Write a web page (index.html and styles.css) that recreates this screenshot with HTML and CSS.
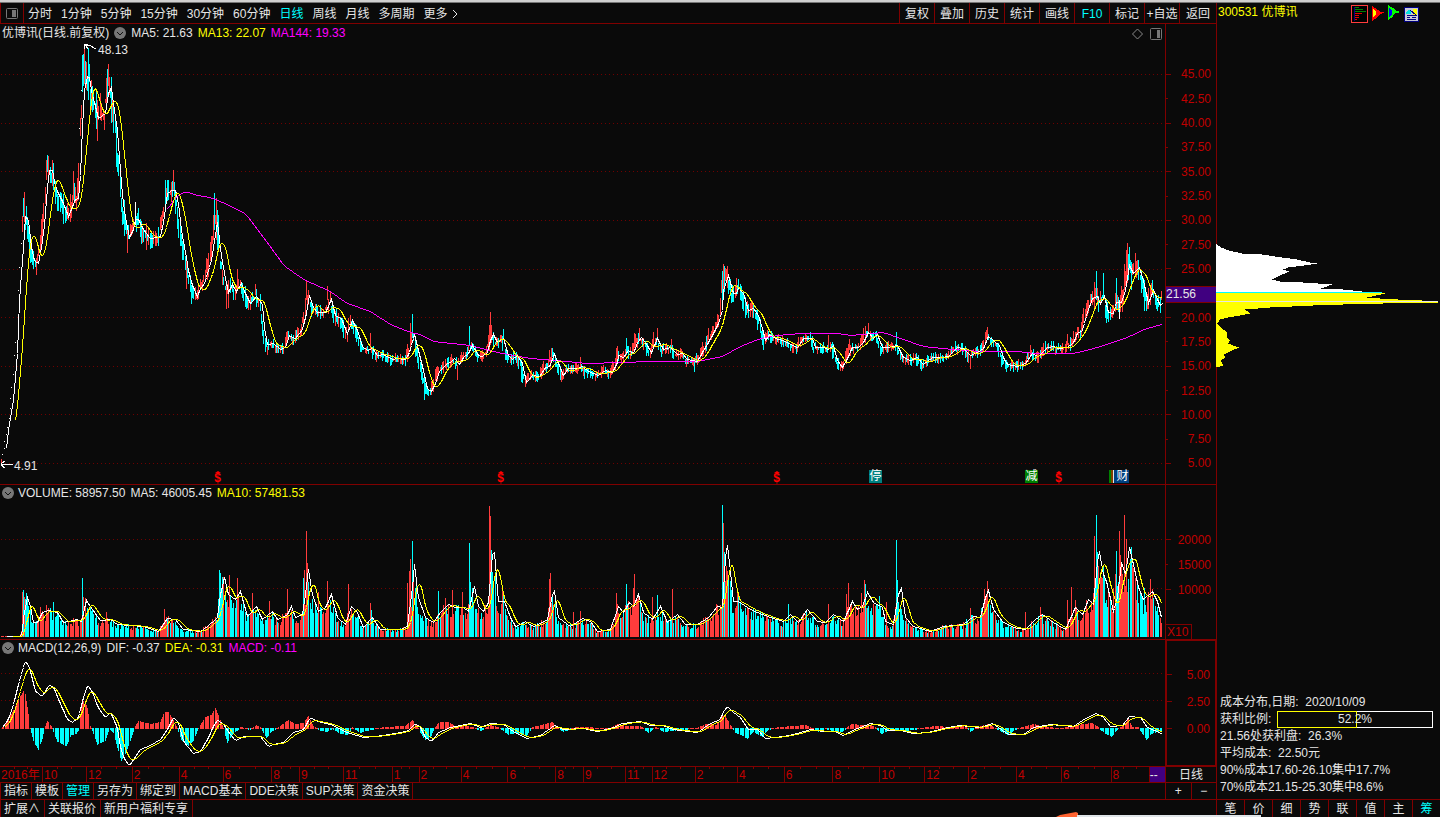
FILE: index.html
```html
<!DOCTYPE html>
<html lang="zh-CN">
<head>
    <meta charset="UTF-8">
    <meta name="viewport" content="width=device-width, initial-scale=1.0">
    <title>300531 优博讯 日线</title>
    <link rel="stylesheet" href="styles.css">
</head>
<body>
    <div class="window-edge"></div>
    <div class="terminal">
        <nav class="toolbar">
            <button type="button" class="layout-btn" aria-label="布局">
                <svg width="14" height="12" viewBox="0 0 14 12">
                    <rect x="1.5" y="0.5" width="11" height="10" rx="1" fill="none" stroke="#777"/>
                    <rect x="7" y="2" width="4" height="7" fill="#777"/>
                </svg>
            </button>
            <div class="periods">
                <button type="button">分时</button>
                <button type="button">1分钟</button>
                <button type="button">5分钟</button>
                <button type="button">15分钟</button>
                <button type="button">30分钟</button>
                <button type="button">60分钟</button>
                <button type="button" class="active">日线</button>
                <button type="button">周线</button>
                <button type="button">月线</button>
                <button type="button">多周期</button>
                <button type="button" class="more">更多<svg width="6" height="10" viewBox="0 0 6 10"><path d="M1 1L5 5L1 9" fill="none" stroke="#e6e6e6"/></svg></button>
            </div>
            <div class="tools">
                <button type="button">复权</button>
                <button type="button">叠加</button>
                <button type="button">历史</button>
                <button type="button">统计</button>
                <button type="button">画线</button>
                <button type="button" class="active">F10</button>
                <button type="button">标记</button>
                <button type="button">+自选</button>
                <button type="button">返回</button>
            </div>
        </nav>

        <header class="stock">
            <span class="stock-name">300531 优博讯</span>
            <div class="stock-icons">
                <svg width="17" height="18" viewBox="0 0 17 18" shape-rendering="crispEdges">
                    <rect x="0.5" y="0.5" width="16" height="17" fill="#000" stroke="#ff3c3c"/>
                    <path d="M3.5 2V16" stroke="#000080"/>
                    <path d="M4 2.5H8M4 4.5H12M4 6.5H15" stroke="#008000"/>
                    <path d="M4 8.5H11M4 10.5H8M4 12.5H8M4 14.5H6" stroke="#e00000"/>
                </svg>
                <svg width="12" height="18" viewBox="0 0 12 18" shape-rendering="crispEdges">
                    <path d="M0 1L3 3L6 5L8 7H12V8L8 9L6 11L3 14L0 16Z" fill="#f00"/>
                    <path d="M1 4L4 7V9L1 13Z" fill="#ff0"/>
                </svg>
                <svg width="12" height="18" viewBox="0 0 12 18" shape-rendering="crispEdges">
                    <path d="M0 0L3 2L7 4L8 6H11V8L7 8L5 11L3 13L0 15Z" fill="#0f0"/>
                    <path d="M1 3L4 6V9L1 13Z" fill="#00f"/>
                </svg>
                <svg width="15" height="15" viewBox="0 0 15 15" shape-rendering="crispEdges">
                    <rect width="15" height="15" fill="#000080"/>
                    <rect x="1" y="1" width="13" height="13" fill="#c8c8d8"/>
                    <rect x="9" y="2" width="4" height="6" fill="#ff0"/>
                    <path d="M2 7V5L4 3H7V7Z" fill="#00e0e0"/>
                    <path d="M6 3L12 8H3" fill="none" stroke="#000080"/>
                    <path d="M3 10.500H6M8 10.500H12M3 12.500H12" stroke="#000080"/>
                </svg>
            </div>
        </header>

        <section class="pane price-pane">
            <svg id="price" class="chart" viewBox="0 24 1165 460" preserveAspectRatio="none"></svg>
            <div class="legend">
                <span>优博讯(日线.前复权)</span>
                <svg class="fold" width="12" height="12" viewBox="0 0 12 12"><circle cx="6" cy="6" r="6" fill="#777"/><path d="M3 5L6 8L9 5" fill="none" stroke="#111" stroke-width="1"/></svg>
                <span>MA5: 21.63</span>
                <span class="yellow">MA13: 22.07</span>
                <span class="magenta">MA144: 19.33</span>
            </div>
            <div class="pane-icons">
                <svg width="11" height="12" viewBox="0 0 11 12"><path d="M5.500 1L10.500 6L5.500 11L0.500 6Z" fill="none" stroke="#888"/></svg>
                <svg width="12" height="12" viewBox="0 0 12 12"><rect x="0.500" y="0.500" width="11" height="11" rx="1" fill="none" stroke="#777"/><rect x="7" y="2" width="3" height="8" fill="#777"/></svg>
            </div>
            <span class="high-label">48.13</span>
            <span class="low-label">4.91</span>
            <div id="markers"></div>
        </section>
        <div class="axis price-axis">
            <ol id="price-scale"></ol>
            <span class="price-tag">21.56</span>
        </div>

        <section class="distribution">
            <svg id="dist" class="chart" viewBox="1216 24 224 460" preserveAspectRatio="none"></svg>
        </section>

        <section class="pane volume-pane">
            <svg id="volume" class="chart" viewBox="0 485 1165 154" preserveAspectRatio="none"></svg>
            <div class="legend">
                <svg class="fold" width="12" height="12" viewBox="0 0 12 12"><circle cx="6" cy="6" r="6" fill="#777"/><path d="M3 5L6 8L9 5" fill="none" stroke="#111" stroke-width="1"/></svg>
                <span>VOLUME: 58957.50</span>
                <span>MA5: 46005.45</span>
                <span class="yellow">MA10: 57481.53</span>
            </div>
        </section>
        <div class="axis volume-axis">
            <ol id="volume-scale"></ol>
            <span class="unit">X10</span>
        </div>

        <section class="pane macd-pane">
            <svg id="macd" class="chart" viewBox="0 640 1165 126" preserveAspectRatio="none"></svg>
            <div class="legend">
                <svg class="fold" width="12" height="12" viewBox="0 0 12 12"><circle cx="6" cy="6" r="6" fill="#777"/><path d="M3 5L6 8L9 5" fill="none" stroke="#111" stroke-width="1"/></svg>
                <span>MACD(12,26,9)</span>
                <span>DIF: -0.37</span>
                <span class="yellow">DEA: -0.31</span>
                <span class="magenta">MACD: -0.11</span>
            </div>
        </section>
        <div class="axis macd-axis">
            <ol id="macd-scale"></ol>
        </div>

        <div class="dates" id="dates"></div>
        <div class="period-name">日线</div>

        <nav class="tabs indicator-tabs">
            <button type="button">指标</button>
            <button type="button">模板</button>
            <button type="button" class="active">管理</button>
            <button type="button">另存为</button>
            <button type="button">绑定到</button>
            <button type="button">MACD基本</button>
            <button type="button">DDE决策</button>
            <button type="button">SUP决策</button>
            <button type="button">资金决策</button>
        </nav>
        <div class="zoom-btns">
            <button type="button">+</button>
            <button type="button">−</button>
        </div>

        <section class="cost-info">
            <p>成本分布,日期:&nbsp; 2020/10/09</p>
            <div class="profit-row">
                <span>获利比例:</span>
                <div class="profit-bar"><div class="profit-fill" id="profit-fill"></div><span>52.2%</span></div>
            </div>
            <p>21.56处获利盘:&nbsp; 26.3%</p>
            <p>平均成本:&nbsp; 22.50元</p>
            <p>90%成本17.60-26.10集中17.7%</p>
            <p>70%成本21.15-25.30集中8.6%</p>
        </section>

        <nav class="tabs extend-tabs">
            <button type="button">扩展∧</button>
            <button type="button">关联报价</button>
            <button type="button">新用户福利专享</button>
        </nav>
        <nav class="side-tabs">
            <button type="button">笔</button>
            <button type="button">价</button>
            <button type="button">细</button>
            <button type="button">势</button>
            <button type="button">联</button>
            <button type="button">值</button>
            <button type="button">主</button>
            <button type="button" class="active">筹</button>
        </nav>
    </div>
    <svg class="popup-edge" width="205" height="5" viewBox="0 0 205 5">
        <path d="M0 5L4 3L20 0L22 1V5Z" fill="#ff6432"/>
        <rect x="21" y="3" width="184" height="2" fill="#dfe4e8"/>
    </svg>

    <script src="chart.js"></script>
</body>
</html>
```
FILE: styles.css
```css
:root {
    --bg: #0a0a0a;
    --line: #800000;
    --text: #e6e6e6;
    --scale: #c00000;
    --cyan: #00ffff;
    --yellow: #ffff00;
    --magenta: #ff00ff;
    --purple: #400080;
}
* {
    box-sizing: border-box;
}
body {
    position: relative;
    margin: 0;
    height: 100vh;
    display: flex;
    flex-direction: column;
    overflow: hidden;
    background: var(--bg);
    color: var(--text);
    font-family: "Liberation Sans", "Noto Sans CJK SC", sans-serif;
    font-size: 12px;
    line-height: 16px;
    white-space: nowrap;
}
button {
    margin: 0;
    padding: 0;
    border: 0;
    background: none;
    color: inherit;
    font: inherit;
    cursor: pointer;
}
p, ol {
    margin: 0;
    padding: 0;
    list-style: none;
}
svg {
    display: block;
}
.active {
    color: var(--cyan);
}
.yellow {
    color: var(--yellow);
}
.magenta {
    color: var(--magenta);
}
.window-edge {
    height: 3px;
    flex: none;
    background: #d0d0d0;
    border-bottom: 1px solid #777;
}
.terminal {
    flex: 1;
    min-height: 0;
    display: grid;
    grid-template-columns: minmax(0, 1fr) 51px 224px;
    grid-template-rows: 21px minmax(0, 1fr) 155px 127px 16px 17px 17px;
}

/* toolbar */
.toolbar {
    grid-column: 1 / 3;
    display: flex;
    border-bottom: 1px solid var(--line);
}
.toolbar button {
    padding-top: 1px;
}
.toolbar .layout-btn {
    width: 24px;
    padding-left: 4px;
    border-left: 1px solid var(--line);
    border-right: 1px solid var(--line);
}
.periods {
    display: flex;
    flex: 1;
    gap: 9px;
    padding-left: 4px;
}
.more {
    display: flex;
    align-items: center;
    gap: 4px;
}
.tools {
    display: flex;
}
.tools button {
    width: 35px;
    border-left: 1px solid var(--line);
}
.tools button:last-child {
    width: 37px;
}
.stock {
    display: flex;
    justify-content: space-between;
    padding: 1px 21px 0 1px;
    border-left: 1px solid var(--line);
    color: var(--yellow);
}
.stock-icons {
    display: flex;
    align-items: center;
    gap: 4px;
}

/* chart panes */
.pane {
    grid-column: 1;
    position: relative;
    overflow: hidden;
    border-bottom: 1px solid var(--line);
}
.chart {
    width: 100%;
    height: 100%;
    shape-rendering: crispEdges;
}
.chart path {
    fill: none;
    vector-effect: non-scaling-stroke;
}
.legend {
    position: absolute;
    top: 0;
    left: 2px;
    display: flex;
    align-items: center;
    gap: 5px;
}
.price-pane .legend {
    top: 1px;
}
.volume-pane .fold,
.macd-pane .fold {
    margin-right: -1px;
}
.pane-icons {
    position: absolute;
    top: 4px;
    right: 3px;
    display: flex;
    gap: 7px;
}
.high-label {
    position: absolute;
    top: 18px;
    left: 98px;
}
.low-label {
    position: absolute;
    bottom: 10px;
    left: 14px;
}
.marker {
    position: absolute;
    bottom: 1px;
    width: 13px;
    height: 13px;
    line-height: 13px;
    text-align: center;
    color: #fff;
}
.marker.dividend {
    color: #f00;
    font-weight: bold;
    bottom: 0;
    line-height: 15px;
}
.marker.dividend::before {
    content: "";
    position: absolute;
    top: 0;
    left: 4px;
    border: 3px solid transparent;
    border-top: 0;
    border-bottom: 2px solid #f00;
}
.marker.halt {
    background: #008080;
}
.marker.reduce {
    background: #008000;
}
.marker.report {
    width: 16px;
    padding-left: 2px;
    background: #004080;
    border-left: 1px solid #e6e6e6;
}
.marker.stacked {
    width: 6px;
    background: linear-gradient(90deg, #008000 2px, #804000 2px);
}

/* value axes */
.axis {
    position: relative;
    border-left: 1px solid var(--line);
    border-bottom: 1px solid var(--line);
    color: var(--scale);
}
.axis ol {
    height: 100%;
    display: grid;
}
.axis ol::before {
    content: "";
}
.axis li {
    display: flex;
    align-items: center;
    justify-content: space-between;
    padding-right: 5px;
    min-height: 0;
}
.axis li::before {
    content: "";
    width: 2px;
    height: 1px;
    background: var(--line);
}
.axis li.major::before {
    width: 5px;
}
.price-axis ol {
    grid-template-rows: 383fr repeat(17, 243fr) 84fr;
}
.volume-axis ol {
    grid-template-rows: 42fr repeat(3, 25fr) 37fr;
}
.macd-axis {
    border: 2px solid var(--line);
    border-top-width: 1px;
    border-right-width: 1px;
}
.macd-axis ol {
    grid-template-rows: 20fr repeat(3, 27fr) 23fr;
}
.price-tag {
    position: absolute;
    top: 57%;
    left: 0;
    right: 0;
    height: 17px;
    line-height: 15px;
    border: 1px solid var(--line);
    border-width: 1px 0;
    background: var(--purple);
    color: var(--text);
}
.unit {
    position: absolute;
    left: 0;
    bottom: 0;
    width: 26px;
    height: 15px;
    line-height: 14px;
    padding-left: 1px;
    border: 1px solid var(--line);
    border-width: 1px 1px 0 0;
}

/* date axis */
.dates {
    grid-column: 1;
    display: flex;
    border-bottom: 1px solid var(--line);
    color: var(--scale);
    line-height: 16px;
}
.dates span {
    flex-basis: 0;
    min-width: 0;
    padding-left: 1px;
    border-left: 1px solid var(--line);
    background:
        linear-gradient(var(--line), var(--line)) 33% 0 / 1px 2px no-repeat,
        linear-gradient(var(--line), var(--line)) 67% 0 / 1px 2px no-repeat;
}
.dates span:first-child {
    border-left: 0;
}
.dates .cursor {
    background: var(--purple);
    color: var(--text);
    padding-left: 0;
}
.period-name {
    border-left: 1px solid var(--line);
    border-bottom: 1px solid var(--line);
    text-align: center;
}

/* bottom tabs */
.tabs {
    display: flex;
    line-height: 16px;
}
.tabs button {
    padding: 0 4px 0 3px;
    border-right: 1px solid var(--line);
}
.indicator-tabs {
    grid-column: 1;
    border-bottom: 1px solid var(--line);
}
.indicator-tabs button {
    padding-right: 3px;
}
.extend-tabs {
    grid-column: 1 / 3;
}
.tabs button:first-child {
    border-left: 1px solid var(--line);
}
.zoom-btns {
    display: flex;
    border-bottom: 1px solid var(--line);
}
.zoom-btns button {
    flex: 1;
    line-height: 14px;
    border-left: 1px solid var(--line);
}

/* right panel */
.distribution {
    padding-bottom: 1px;
    border-left: 1px solid var(--line);
}
.distribution .chart {
    position: relative;
    margin-left: -1px;
    width: 224px;
}
.chart path.solid {
    fill: currentColor;
}
.cost-info {
    grid-column: 3;
    grid-row: 3 / 7;
    display: flex;
    flex-direction: column;
    justify-content: flex-end;
    padding: 0 7px 3px 3px;
    border-left: 1px solid var(--line);
    border-bottom: 1px solid var(--line);
    line-height: 17px;
}
.profit-row {
    display: flex;
    justify-content: space-between;
}
.profit-bar {
    position: relative;
    width: 156px;
    height: 17px;
    line-height: 15px;
    border: 1px solid #fff;
    text-align: center;
}
.profit-bar span {
    position: relative;
}
.profit-fill {
    position: absolute;
    top: -1px;
    bottom: -1px;
    left: -1px;
    border: 1px solid var(--yellow);
}
.side-tabs {
    display: flex;
    grid-column: 3;
}
.side-tabs button {
    flex: 1;
    border-left: 1px solid var(--line);
}
.popup-edge {
    position: absolute;
    right: 179px;
    bottom: 0;
}
```
FILE: chart.js
```js
const RED = '#ff3c3c';
const CYAN = '#00ffff';
const WHITE = '#ffffff';
const YELLOW = '#ffff00';
const MAGENTA = '#ff00ff';
const GRID = '#700000';

// "x,y x,y ..." key points of each line
const priceMa5 = parse(`6,448 8,430 13,400 17,353 19,300 22,260 23,247 25,216 28,220 31,247 34,260 38,263 41,247 44,225 47,187
49,170 52,170 55,186 59,195 63,203 68,216 72,206 75,199 78,198 80,175 82,127 84,90 87,76 89,77 92,95 95,106 98,118 102,115 105,113
108,93 111,87 113,103 117,130 119,157 122,195 125,217 129,237 133,229 135,219 138,219 142,227 146,233 150,238 157,237 160,236 163,222
167,193 171,190 175,190 178,203 181,230 186,257 188,270 192,285 197,296 200,288 204,283 208,270 211,260 217,222 221,255 225,278
228,292 232,284 236,291 241,283 245,293 250,303 256,296 262,304 264,327 267,344 273,343 280,349 285,347 289,335 295,338 302,329
306,313 309,295 313,307 317,312 325,312 331,299 335,315 341,318 347,333 352,320 357,330 362,346 367,350 372,348 377,355 383,354
392,359 397,358 405,359 409,352 414,334 418,350 423,370 427,388 431,391 435,383 439,371 447,363 450,362 454,358 459,364 463,357
468,353 472,345 478,355 482,356 487,352 490,340 493,334 497,342 503,338 508,355 512,359 517,355 522,363 526,382 532,375 539,376
545,367 549,366 554,354 558,363 563,375 568,368 577,368 582,366 588,371 598,375 605,370 612,372 617,362 618,355 623,357 628,350
633,353 637,342 641,337 645,342 651,352 657,338 663,349 670,347 677,354 682,353 687,359 697,361 702,352 708,342 713,333 718,323
722,310 723,290 728,275 733,293 736,293 738,287 743,293 748,310 753,308 758,315 762,328 765,340 769,334 775,338 783,340 788,343
797,347 803,338 812,338 815,347 823,347 828,349 833,345 837,360 842,367 847,358 852,347 858,347 863,342 868,332 873,338 877,334
882,347 887,347 897,345 903,357 910,360 917,357 923,364 932,357 940,357 948,356 957,347 963,348 970,355 977,352 983,348 988,336
993,340 999,345 1003,357 1007,364 1017,366 1025,363 1032,353 1038,356 1047,347 1053,346 1058,348 1067,347 1073,342 1077,333
1082,330 1087,312 1092,298 1097,296 1100,303 1104,296 1108,312 1113,313 1116,302 1121,302 1125,290 1129,265 1133,273 1139,267
1143,280 1148,303 1153,290 1160,305 1162,303`);

const priceMa144 = parse(`166,210 177,195 185,191 197,195 210,197 227,204 245,213 263,237 280,260 283,265 305,280 328,290 347,303
370,311 390,324 410,332 420,334 433,341 470,345 497,352 530,358 567,361 587,363 620,362 650,361 697,361 722,356 740,346 760,338
777,335 800,333 838,333 850,335 883,332 900,338 923,346 953,349 980,351 1018,351 1033,353 1073,353 1097,347 1127,337 1143,329 1161,324`);

// x, high, low, colour of the days that stand out
const priceSpikes = `22,216,232,r 23,198,217,c 24,192,222,r 26,206,225,c 29,228,250,c 46,160,180,r 47,155,172,c 48,156,178,r 52,160,186,r
53,163,190,c 73,171,200,r 74,183,203,c 78,163,200,r 82,55,92,c 83,54,86,c 84,47,84,r 85,61,88,c 86,62,90,r 88,48,100,c 89,64,82,c
91,80,110,r 92,86,112,c 96,90,129,c 97,100,141,r 100,93,120,r 104,115,130,r 106,78,108,r 107,69,97,c 108,64,86,r 109,77,95,r
111,77,123,c 112,100,122,r 116,125,167,c 120,170,197,c 124,200,236,c 127,228,253,r 135,202,225,w 138,208,225,c 165,180,205,c
168,180,200,c 173,170,190,r 174,182,196,c 186,260,289,r 191,285,304,c 213,215,240,r 214,193,230,c 216,198,240,r 217,210,250,c
218,215,252,c 222,270,285,r 226,285,309,r 228,280,308,r 237,269,290,r 255,284,295,r 267,346,355,r 306,281,300,r 308,290,305,r
327,286,300,r 330,291,302,r 347,333,342,r 370,333,350,r 405,355,366,c 410,323,350,r 412,314,338,c 424,375,400,c 457,365,380,r
469,326,345,c 489,325,350,r 490,312,345,r 491,325,343,r 503,329,340,c 521,360,382,c 525,375,387,r 549,350,362,r 551,348,360,r
580,357,368,r 584,366,379,c 610,368,378,r 617,346,362,r 626,338,355,c 634,333,348,r 639,328,340,r 653,332,345,r 657,328,340,r
671,339,350,r 694,358,372,c 708,328,340,r 717,314,328,r 722,271,300,c 723,264,290,r 724,266,292,c 727,266,288,r 729,278,290,c
732,285,302,c 738,279,290,c 762,330,345,c 828,335,349,r 849,339,350,r 863,328,340,r 868,323,334,r 896,332,345,c 970,355,369,r
987,327,338,r 1015,362,370,r 1030,345,355,r 1038,352,363,r 1067,334,345,r 1086,303,318,r 1092,291,305,r 1094,282,310,r
1096,271,300,c 1097,288,305,r 1103,273,300,c 1106,300,323,c 1112,305,318,r 1116,278,310,c 1119,300,319,w 1122,290,312,r
1124,264,290,r 1126,250,282,r 1127,243,283,r 1128,254,280,c 1129,247,270,c 1131,262,290,c 1135,253,275,r 1137,260,275,r
1144,280,311,c 1152,280,295,c 1158,295,307,c 1161,291,300,r`;

// one-price days at the start
const limitDays = '2,454 4,448 4,441 6,434 7,427 9,418 10,408 10,398 11,387 13,374 14,355 15,342 18,290 19,267 21,243 79,128 81,90';

const volumeMa5 = parse(`2,636 20,636 22,630 23,617 27,597 30,606 33,622 37,622 42,612 48,610 57,612 63,622 77,619 81,621 86,600 92,609
100,620 110,619 117,624 143,626 158,631 167,618 175,619 183,629 200,631 207,626 217,617 220,594 224,577 228,594 235,599 240,591
247,616 256,606 262,619 272,611 277,619 287,614 291,606 295,617 302,614 305,594 308,569 312,594 318,611 325,607 331,594 337,617
345,624 351,606 357,612 363,627 372,617 380,629 400,629 407,626 412,587 414,564 418,597 425,617 433,622 440,612 448,604 455,607
463,607 468,611 474,586 478,606 483,611 488,602 492,554 494,552 498,601 504,601 510,617 515,626 525,621 533,626 547,619 552,594
554,591 558,617 570,626 582,618 590,621 597,631 610,629 618,606 623,612 629,602 633,606 638,594 643,612 652,619 660,606 667,622
677,614 685,624 697,624 708,617 717,606 722,607 725,557 727,545 730,571 733,601 738,601 747,607 757,612 770,617 783,621 790,614
798,622 807,609 817,621 825,622 833,614 843,621 852,601 857,609 862,606 867,592 873,602 882,607 885,621 893,624 898,594 901,588
905,617 913,626 930,631 943,626 963,624 973,616 980,617 985,597 988,590 993,609 1002,621 1013,627 1025,629 1035,619 1042,614
1053,622 1065,629 1075,607 1082,614 1088,599 1093,604 1097,561 1099,551 1103,574 1106,581 1113,611 1117,597 1121,562 1125,574
1129,547 1133,564 1138,587 1143,599 1152,591 1157,601 1161,617`);

const volumeSpikes = `22,592,r 23,590,c 24,597,r 40,607,r 46,605,r 53,602,c 82,578,c 83,597,r 106,612,r 164,609,r 219,570,c 220,573,c
223,577,r 229,575,r 237,578,r 252,593,r 269,601,r 287,589,r 303,578,c 304,570,r 306,531,r 318,592,r 327,581,r 348,584,r 370,603,r
371,610,c 407,583,r 409,571,r 410,559,r 412,541,c 413,580,r 438,591,c 445,598,r 452,590,r 462,592,r 469,543,c 470,582,c 489,506,r
490,516,r 491,550,c 492,572,c 502,589,r 503,593,c 549,579,r 550,573,r 573,612,r 580,611,r 616,593,r 626,584,c 633,588,r 634,574,r
638,593,r 652,597,r 657,595,c 672,589,r 722,505,c 723,523,r 724,552,c 727,571,r 728,578,c 737,590,r 738,594,c 788,604,c 828,604,r
846,594,r 848,583,r 861,593,r 864,580,r 865,584,c 879,596,c 886,602,r 896,540,c 897,580,c 970,608,r 984,589,r 987,581,r 988,604,c
1025,612,r 1040,607,r 1067,600,r 1071,587,r 1075,600,r 1094,536,r 1096,515,c 1097,552,c 1098,566,r 1103,565,c 1104,575,c
1113,588,r 1115,574,r 1116,551,c 1119,531,r 1124,515,r 1126,539,r 1131,547,c 1144,588,c 1150,579,r`;

const dif = parse(`2,727 8,719 13,704 18,684 25,660 29,667 35,691 42,696 48,685 53,686 58,699 67,719 72,722 78,717 83,697 87,685
92,691 97,706 105,717 110,712 117,727 120,747 124,759 129,765 133,759 140,749 150,745 160,739 167,729 173,717 178,722 183,741
193,753 200,751 207,739 213,726 217,719 223,724 230,734 235,740 243,736 260,736 268,746 273,744 283,742 293,732 303,729 310,717
317,721 330,724 337,727 347,732 363,737 383,735 400,732 408,730 415,723 420,727 425,737 431,741 438,732 450,727 470,723 480,727
490,723 503,724 513,731 526,738 540,735 554,725 563,729 583,728 597,731 613,727 622,723 640,721 650,725 662,725 673,729 697,732
710,723 720,719 723,711 727,706 733,712 740,717 748,729 757,729 765,738 783,736 797,733 810,729 823,731 835,731 843,735 852,730
870,723 880,725 887,730 900,730 913,733 927,732 947,727 960,725 980,727 992,723 998,727 1008,734 1023,734 1033,727 1050,724
1073,726 1085,718 1096,713 1103,717 1110,726 1122,725 1129,716 1140,717 1147,727 1161,733`);

// MACD columns, distance from the zero line (up is positive)
const macdColumns = parse(`2,1 6,6 12,16 18,28 23,37 25,34 28,14 30,0 33,-12 38,-21 42,-10 44,0 47,7 50,3 52,0 57,-13 66,-17 71,-6
76,-5 79,0 81,22 84,30 87,20 90,2 92,-2 97,-16 105,-12 109,0 113,-4 117,-19 121,-32 125,-25 130,-12 134,0 138,7 150,4 160,6 164,16
168,16 173,8 177,0 181,-11 188,-17 193,-12 198,0 205,11 211,13 215,20 219,10 223,0 227,-14 232,-6 240,1 250,-1 256,3 261,0 266,-9
271,-3 280,2 288,8 295,4 303,5 308,12 313,2 320,-2 327,-3 332,0 340,-5 347,-6 352,1 360,-4 370,-1 385,1 405,2 412,8 418,0 424,-11
430,-9 434,0 439,6 447,6 455,2 465,2 472,1 480,-2 485,0 490,3 500,0 508,-6 515,-4 526,-7 532,1 545,4 552,6 558,0 563,-3 575,1
610,0 618,4 625,2 640,2 648,-4 655,1 663,-3 680,-1 696,0 706,4 716,3 722,12 725,12 730,3 735,-4 741,-6 747,-10 753,-3 762,-8
768,-1 780,1 805,3 812,0 818,-3 825,0 832,-2 840,-4 846,0 851,4 862,3 870,3 876,0 881,-5 890,-1 905,-2 920,0 935,2 950,1 965,2
970,-3 978,1 988,4 995,0 1003,-4 1008,-6 1015,-1 1022,1 1033,4 1045,1 1060,0 1075,2 1083,4 1092,5 1098,1 1105,-5 1111,-8
1117,-1 1123,2 1128,9 1132,1 1138,1 1141,-3 1146,-11 1151,-5 1161,-2`);

// cost distribution outline, y then x
const distribution = parse(`244,1217 247,1221 250,1229 253,1242 254,1262 257,1282 259,1297 262,1310 263,1317 265,1304 267,1288
269,1283 271,1289 275,1280 279,1272 281,1280 282,1303 284,1332 288,1321 289,1343 291,1362 292,1382 293,1385 297,1367 298,1380
299,1398 300,1422 301,1438 302,1438 303,1383 304,1343 305,1313 307,1270 309,1245 313,1250 315,1240 317,1228 319,1220 323,1217
328,1222 332,1227 337,1227 340,1230 343,1228 345,1233 347,1239 350,1232 354,1224 357,1225 360,1221 365,1223 367,1217`);

const dates = [['2016年', 0], ['10', 43], ['12', 87], ['2', 133], ['4', 180], ['6', 224], ['8', 273], ['9', 300], ['11', 344],
    ['1', 393], ['2', 419], ['4', 461], ['6', 508], ['8', 556], ['9', 583], ['11', 625], ['12', 651], ['2', 694], ['4', 736],
    ['6', 783], ['8', 832], ['10', 879], ['12', 924], ['2', 968], ['4', 1016], ['6', 1061], ['8', 1111], ['--', 1149]];

const markers = [['$', 211, 'dividend'], ['$', 494, 'dividend'], ['$', 770, 'dividend'], ['停', 869, 'halt'], ['减', 1025, 'reduce'],
    ['$', 1052, 'dividend'], ['', 1109, 'stacked'], ['财', 1113, 'report']];

function parse(text) {
    return text.trim().split(/\s+/).map(p => p.split(',').map(Number));
}

function valueAt(points, x) {
    if (x <= points[0][0]) return points[0][1];
    for (let i = 1; i < points.length; i++) {
        const [x1, y1] = points[i];
        if (x <= x1) {
            const [x0, y0] = points[i - 1];
            return y0 + (y1 - y0) * (x - x0) / (x1 - x0);
        }
    }
    return points[points.length - 1][1];
}

let seed = 300531;
function rand() {
    seed = (seed * 1103515245 + 12345) % 2147483648;
    return seed / 2147483648;
}

function addPath(svg, d, stroke, dash) {
    const path = document.createElementNS('http://www.w3.org/2000/svg', 'path');
    path.setAttribute('d', d);
    path.setAttribute('stroke', stroke);
    if (dash) path.setAttribute('stroke-dasharray', dash);
    svg.appendChild(path);
    return path;
}

function addArea(svg, d, color) {
    const path = addPath(svg, d, 'none');
    path.setAttribute('class', 'solid');
    path.setAttribute('color', color);
}

function addLine(svg, fn, from, to, stroke) {
    let d = '';
    for (let x = from; x <= to; x++) {
        d += (d ? 'L' : 'M') + (x + 0.5) + ' ' + (Math.round(fn(x)) + 0.5);
    }
    addPath(svg, d, stroke);
}

function addGrid(svg, rows) {
    rows.forEach(y => addPath(svg, `M1 ${y + 0.5}H1162`, GRID, '1 3'));
}

// average of the last n pixels of a line
function trailing(points, n) {
    return x => {
        let sum = 0;
        for (let i = 0; i < n; i++) sum += valueAt(points, x - i);
        return sum / n;
    };
}

// same, centred on x, to round the corners off
function smooth(points, n) {
    const average = trailing(points, n);
    return x => average(x + (n - 1) / 2);
}

// bars: Map of x -> [top, bottom, colour]
function addBars(svg, bars) {
    const d = { r: '', c: '', w: '' };
    bars.forEach(([top, bottom, colour], x) => {
        d[colour] += `M${x + 0.5} ${Math.round(top)}V${Math.round(bottom)}`;
    });
    addPath(svg, d.r, RED);
    addPath(svg, d.c, CYAN);
    addPath(svg, d.w, WHITE);
}

function drawPrice() {
    const svg = document.getElementById('price');
    addGrid(svg, [74, 123, 171, 220, 269, 317, 366, 414, 463]);
    const bars = new Map();
    for (let x = 22; x < 1162; x++) {
        if (x % 5 === 4) continue;
        const mid = valueAt(priceMa5, x + 2);
        const slope = valueAt(priceMa5, x + 3) - valueAt(priceMa5, x);
        const amp = (mid < 240 ? 11 : mid < 320 ? 8 : 5) + Math.min(Math.abs(slope), 8) / 2;
        const up = rand() < 0.5 - slope / 12;
        bars.set(x, [mid - rand() * amp, mid + 2 + rand() * amp, up ? 'r' : 'c']);
    }
    priceSpikes.split(/\s+/).forEach(s => {
        const [x, high, low, colour] = s.split(',');
        bars.set(+x, [+high, +low, colour]);
    });
    addBars(svg, bars);
    parse(limitDays).forEach(([x, y]) => addPath(svg, `M${x} ${y + 0.5}h1`, WHITE));
    addPath(svg, 'M1.5 459V463', RED);
    addLine(svg, smooth(priceMa144, 9), 166, 1161, MAGENTA);
    addLine(svg, x => valueAt(priceMa5, x), 6, 1162, WHITE);
    addLine(svg, trailing(priceMa5, 12), 15, 1162, YELLOW);
    // arrows to the highest and lowest price
    addPath(svg, 'M84.5 49V44.5H88M85 45.500H90L96 49M86 46L88 49', WHITE);
    addPath(svg, 'M1 464.500H13M1 464L5 461M1 465L5 468', WHITE);
}

function drawVolume() {
    const svg = document.getElementById('volume');
    addGrid(svg, [539, 588]);
    const bars = new Map();
    for (let x = 1; x < 1162; x++) {
        if (x % 5 === 4) continue;
        const height = 637 - valueAt(volumeMa5, x + 1);
        const slope = valueAt(priceMa5, x + 3) - valueAt(priceMa5, x);
        bars.set(x, [637 - Math.min(height, 75) * (0.6 + rand() * 0.5), 637, x < 22 || rand() < 0.5 - slope / 12 ? 'r' : 'c']);
    }
    volumeSpikes.split(/\s+/).forEach(s => {
        const [x, top, colour] = s.split(',');
        bars.set(+x, [+top, 637, colour]);
    });
    addBars(svg, bars);
    addLine(svg, x => valueAt(volumeMa5, x), 6, 1161, WHITE);
    addLine(svg, trailing(volumeMa5, 9), 12, 1161, YELLOW);
}

function drawMacd() {
    const svg = document.getElementById('macd');
    const zero = 728;
    addGrid(svg, [673, 700, zero]);
    const line = smooth(dif, 3);
    const dea = [];
    let value = zero;
    for (let x = 0; x < 1162; x++) {
        value += (line(x) - value) * 0.2;
        dea.push(value);
    }
    const bars = new Map();
    for (let x = 2; x < 1162; x++) {
        if (x % 5 === 4) continue;
        const h = Math.round(valueAt(macdColumns, x));
        bars.set(x, h >= 0 ? [zero - h, zero + 1, 'r'] : [zero, zero + 1 - h, 'c']);
    }
    addBars(svg, bars);
    addLine(svg, line, 2, 1161, WHITE);
    addLine(svg, x => dea[x], 4, 1161, YELLOW);
}

function drawDistribution() {
    const svg = document.getElementById('dist');
    let white = 'M1216 244';
    let yellow = 'M1216 292';
    for (let y = 244; y <= 366; y++) {
        const row = `H${Math.round(valueAt(distribution, y))}V${y + 1}`;
        if (y < 292) white += row;
        else yellow += row;
    }
    addArea(svg, white + 'H1216Z', WHITE);
    addArea(svg, yellow + 'H1216Z', YELLOW);
    addPath(svg, 'M1216 292.500H1382', CYAN);
    addPath(svg, 'M1216 301.500H1438', '#e6e6e6');
}

function fillScale(id, values, majors) {
    const list = document.getElementById(id);
    values.forEach((text, i) => {
        const li = document.createElement('li');
        li.textContent = text;
        if (majors(i)) li.className = 'major';
        list.appendChild(li);
    });
}

function fillDates() {
    const box = document.getElementById('dates');
    dates.forEach(([text, x], i) => {
        const span = document.createElement('span');
        const end = i + 1 < dates.length ? dates[i + 1][1] : 1165;
        span.textContent = text;
        span.style.flexGrow = end - x;
        if (text === '--') span.className = 'cursor';
        box.appendChild(span);
    });
}

function fillMarkers() {
    const box = document.getElementById('markers');
    markers.forEach(([text, x, type]) => {
        const span = document.createElement('span');
        span.textContent = text;
        span.className = 'marker ' + type;
        span.style.left = (x / 1165 * 100) + '%';
        box.appendChild(span);
    });
}

// the current price tag covers 22.50
const prices = [];
for (let p = 45; p >= 5; p -= 2.5) prices.push(p === 22.5 ? '' : p.toFixed(2));
fillScale('price-scale', prices, i => i % 2 === 0);
fillScale('volume-scale', ['20000', '15000', '10000'], i => i !== 1);
fillScale('macd-scale', ['5.00', '2.50', '0.00'], () => true);
fillDates();
fillMarkers();
drawPrice();
drawVolume();
drawMacd();
drawDistribution();
document.getElementById('profit-fill').style.width = '52.2%';
```
